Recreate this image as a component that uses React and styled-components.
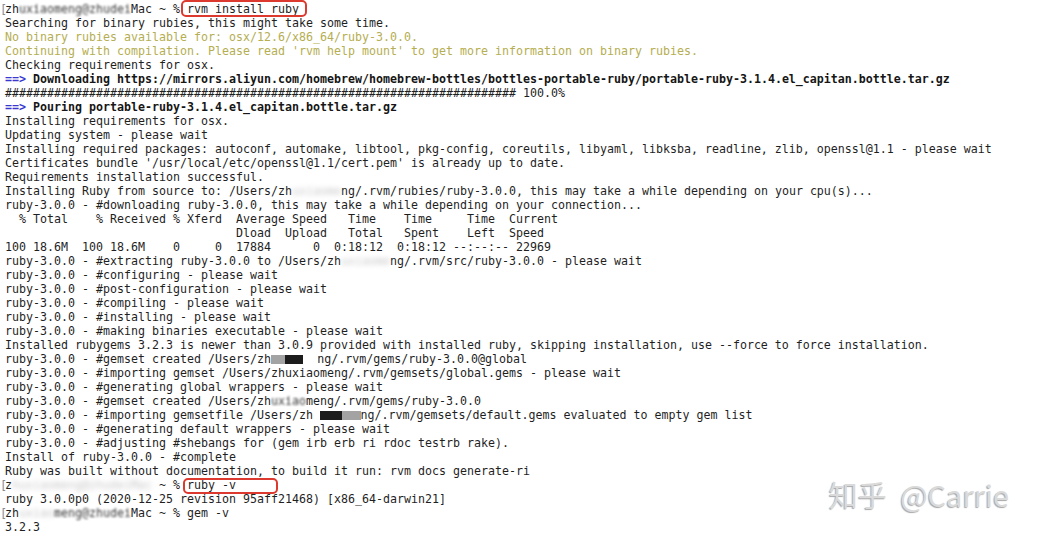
import React from "react";
import styled, { createGlobalStyle } from "styled-components";

const GlobalStyle = createGlobalStyle`
  html, body {
    margin: 0;
    background: #fff;
    overflow: hidden;
  }
`;

const HASHES = "#".repeat(73);

const App = () => {
  return (
    <>
      <GlobalStyle />
      <Screen>
        <Line>
          <Mark>[</Mark>zh<Smear $amount={1}>uxiaomeng@zhudei</Smear>Mac ~ %{" "}
          <Boxed $top={-2} $bottom={-1} $left={-6} $right={-8}>rvm install ruby</Boxed>
        </Line>
        <Line>Searching for binary rubies, this might take some time.</Line>
        <Line $tone="warn">No binary rubies available for: osx/12.6/x86_64/ruby-3.0.0.</Line>
        <Line $tone="warn">
          Continuing with compilation. Please read 'rvm help mount' to get more information on binary rubies.
        </Line>
        <Line>Checking requirements for osx.</Line>
        <Line>
          <Arrow>==&gt;</Arrow>{" "}
          <Strong>
            Downloading https://mirrors.aliyun.com/homebrew/homebrew-bottles/bottles-portable-ruby/portable-ruby-3.1.4.el_capitan.bottle.tar.gz
          </Strong>
        </Line>
        <Line>{HASHES} 100.0%</Line>
        <Line>
          <Arrow>==&gt;</Arrow> <Strong>Pouring portable-ruby-3.1.4.el_capitan.bottle.tar.gz</Strong>
        </Line>
        <Line>Installing requirements for osx.</Line>
        <Line>Updating system - please wait</Line>
        <Line>
          Installing required packages: autoconf, automake, libtool, pkg-config, coreutils, libyaml, libksba, readline, zlib, openssl@1.1 - please wait
        </Line>
        <Line>Certificates bundle '/usr/local/etc/openssl@1.1/cert.pem' is already up to date.</Line>
        <Line>Requirements installation successful.</Line>
        <Line>
          Installing Ruby from source to: /Users/zh<Smear $amount={2.5} $faint>uxiaome</Smear>
          ng/.rvm/rubies/ruby-3.0.0, this may take a while depending on your cpu(s)...
        </Line>
        <Line>ruby-3.0.0 - #downloading ruby-3.0.0, this may take a while depending on your connection...</Line>
        <Line>{"  % Total    % Received % Xferd  Average Speed   Time    Time     Time  Current"}</Line>
        <Line>{"                                 Dload  Upload   Total   Spent    Left  Speed"}</Line>
        <Line>{"100 18.6M  100 18.6M    0     0  17884      0  0:18:12  0:18:12 --:--:-- 22969"}</Line>
        <Line>
          ruby-3.0.0 - #extracting ruby-3.0.0 to /Users/zh<Smear $amount={2.5} $faint>uxiaome</Smear>
          ng/.rvm/src/ruby-3.0.0 - please wait
        </Line>
        <Line>ruby-3.0.0 - #configuring - please wait</Line>
        <Line>ruby-3.0.0 - #post-configuration - please wait</Line>
        <Line>ruby-3.0.0 - #compiling - please wait</Line>
        <Line>ruby-3.0.0 - #installing - please wait</Line>
        <Line>ruby-3.0.0 - #making binaries executable - please wait</Line>
        <Line>
          Installed rubygems 3.2.3 is newer than 3.0.9 provided with installed ruby, skipping installation, use --force to force installation.
        </Line>
        <Line>
          ruby-3.0.0 - #gemset created /Users/zh<Redact $size={2} $shade="#a3a3a3" />
          <Redact $size={2.6} $shade="#1c1c1c" />
          <Smear $amount={2} $faint>{"  "}</Smear>
          ng/.rvm/gems/ruby-3.0.0@global
        </Line>
        <Line>ruby-3.0.0 - #importing gemset /Users/zhuxiaomeng/.rvm/gemsets/global.gems - please wait</Line>
        <Line>ruby-3.0.0 - #generating global wrappers - please wait</Line>
        <Line>
          ruby-3.0.0 - #gemset created /Users/zh<Smear $amount={0.8}>uxiao</Smear>meng/.rvm/gems/ruby-3.0.0
        </Line>
        <Line>
          ruby-3.0.0 - #importing gemsetfile /Users/zh<Smear $amount={1} $faint> </Smear>
          <Redact $size={3.2} $shade="#1c1c1c" />
          <Redact $size={2.6} $shade="#a3a3a3" />
          ng/.rvm/gemsets/default.gems evaluated to empty gem list
        </Line>
        <Line>ruby-3.0.0 - #generating default wrappers - please wait</Line>
        <Line>ruby-3.0.0 - #adjusting #shebangs for (gem irb erb ri rdoc testrb rake).</Line>
        <Line>Install of ruby-3.0.0 - #complete</Line>
        <Line>Ruby was built without documentation, to build it run: rvm docs generate-ri</Line>
        <Line>
          <Mark>[</Mark>z<Smear $amount={2.5} $faint>huxiaomeng@zhudeiMac</Smear> ~ %{" "}
          <Boxed $top={0} $bottom={-2} $left={-4} $right={-42}>ruby -v</Boxed>
        </Line>
        <Line>ruby 3.0.0p0 (2020-12-25 revision 95aff21468) [x86_64-darwin21]</Line>
        <Line>
          <Mark>[</Mark>zh<Smear $amount={2} $faint>uxiao</Smear>
          <Smear $amount={0.8}>meng@zhudei</Smear>Mac ~ % gem -v
        </Line>
        <Line>3.2.3</Line>
        <Watermark>知乎 @Carrie</Watermark>
      </Screen>
    </>
  );
};

const Screen = styled.main`
  position: relative;
  box-sizing: border-box;
  height: 537px;
  overflow: hidden;
  padding: 2px 0 0 5px;
  background: #fff;
  font-family: "DejaVu Sans Mono", "Liberation Mono", monospace;
  font-size: 11.63px;
  color: #1f1f1f;
`;

const Line = styled.div`
  position: relative;
  height: 14px;
  line-height: 14px;
  white-space: pre;
  color: ${(p) => (p.$tone === "warn" ? "#b5ae52" : "#1f1f1f")};
`;

const Mark = styled.span`
  position: absolute;
  left: -5px;
  top: 0;
  color: #8a8a8a;
`;

const Arrow = styled.b`
  font-weight: bold;
  color: #3838cf;
`;

const Strong = styled.b`
  font-weight: bold;
  color: #161616;
`;

const Smear = styled.span`
  filter: blur(${(p) => p.$amount}px);
  color: ${(p) => (p.$faint ? "#c8c8c8" : "#3a3a3a")};
`;

const Redact = styled.span`
  display: inline-block;
  width: ${(p) => p.$size}ch;
  height: 9px;
  vertical-align: -1px;
  background: ${(p) => p.$shade};
  filter: blur(0.6px);
`;

const Boxed = styled.span`
  position: relative;
  &::after {
    content: "";
    position: absolute;
    top: ${(p) => p.$top}px;
    bottom: ${(p) => p.$bottom}px;
    left: ${(p) => p.$left}px;
    right: ${(p) => p.$right}px;
    border: 2px solid #dc3a2e;
    border-radius: 5px;
  }
`;

const Watermark = styled.div`
  position: absolute;
  right: 28px;
  top: 473px;
  font-family: "Noto Sans CJK SC", "Noto Sans", sans-serif;
  font-size: 29px;
  word-spacing: 7px;
  color: #dadada;
  text-shadow: -1px 1px 1px rgba(0, 0, 0, 0.35);
  white-space: pre;
`;

export default App;
